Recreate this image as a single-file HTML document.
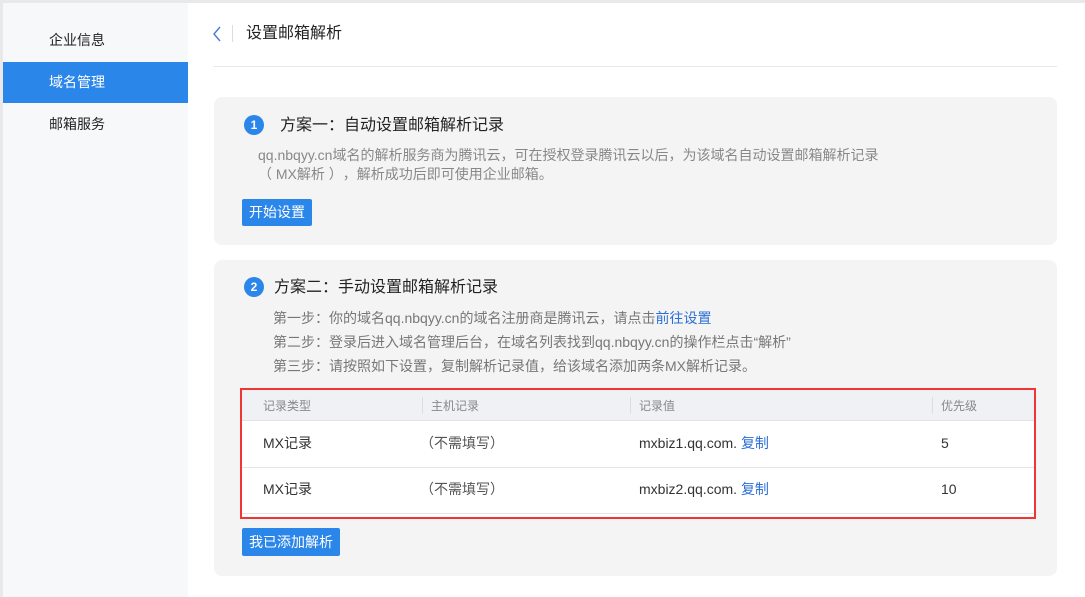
<!DOCTYPE html><html><head><meta charset="utf-8"><style>
*{margin:0;padding:0;box-sizing:border-box}
body{width:1085px;height:597px;background:#e9e9e9;font-family:"Liberation Sans","Noto Sans CJK SC",sans-serif;position:relative;overflow:hidden}
.a{position:absolute;line-height:21px;white-space:nowrap}
.side{left:3px;top:3px;width:185px;height:594px;background:#f7f8fa}
.main{left:188px;top:3px;width:897px;height:594px;background:#fff}
.nav{left:3px;width:185px;height:41px;line-height:41px;padding-left:46px;font-size:14px;color:#222}
.card{left:214px;width:843px;background:#f4f4f4;border-radius:8px}
.num{width:20px;height:20px;border-radius:50%;background:#2b86ea;color:#fff;font-size:12px;text-align:center;line-height:20px;font-weight:bold}
.h{font-size:16px;color:#222}
.btn{background:#2b86ea;color:#fff;font-size:14px;text-align:center;border-radius:2px}
.t{font-size:14px;color:#888}
.s{font-size:14px;color:#777}
.cell{font-size:14px;color:#333}
.hd{font-size:12px;color:#888}
.c{display:inline-block;width:1em;text-align:center}
.k{display:inline-block;width:1em;text-align:left}
</style></head><body>
<div class="a side"></div><div class="a main"></div>
<div class="a nav" style="top:20px">企业信息</div>
<div class="a nav" style="top:62px;background:#2b86ea;color:#fff">域名管理</div>
<div class="a nav" style="top:104px">邮箱服务</div>
<svg class="a" style="left:211px;top:25px" width="14" height="18"><path d="M9 2 L3 9 L9 16" stroke="#4a7bd0" stroke-width="1.4" fill="none"/></svg>
<div class="a" style="left:232px;top:25px;width:1px;height:17px;background:#ddd"></div>
<div class="a h" style="left:246px;top:23px">设置邮箱解析</div>
<div class="a" style="left:213px;top:66px;width:844px;height:1px;background:#e8e8e8"></div>

<div class="a card" style="top:97px;height:148px"></div>
<div class="a num" style="left:244px;top:115px">1</div>
<div class="a h" style="left:280px;top:115px">方案一<span class="c">：</span>自动设置邮箱解析记录</div>
<div class="a t" style="left:258px;top:145px">qq.nbqyy.cn域名的解析服务商为腾讯云<span class="k">，</span>可在授权登录腾讯云以后<span class="k">，</span>为该域名自动设置邮箱解析记录</div>
<div class="a t" style="left:258px;top:164px">（ MX解析 ）<span class="k">，</span>解析成功后即可使用企业邮箱。</div>
<div class="a btn" style="left:242px;top:199px;width:70px;height:27px;line-height:27px">开始设置</div>

<div class="a card" style="top:260px;height:316px"></div>
<div class="a num" style="left:244px;top:277px">2</div>
<div class="a h" style="left:274px;top:277px">方案二<span class="c">：</span>手动设置邮箱解析记录</div>
<div class="a s" style="left:273px;top:308px">第一步<span class="c">：</span>你的域名qq.nbqyy.cn的域名注册商是腾讯云<span class="k">，</span>请点击<span style="color:#2b6fd6">前往设置</span></div>
<div class="a s" style="left:273px;top:332px">第二步<span class="c">：</span>登录后进入域名管理后台<span class="k">，</span>在域名列表找到qq.nbqyy.cn的操作栏点击“解析”</div>
<div class="a s" style="left:273px;top:356px">第三步<span class="c">：</span>请按照如下设置<span class="k">，</span>复制解析记录值<span class="k">，</span>给该域名添加两条MX解析记录。</div>

<div class="a" style="left:240px;top:388px;width:796px;height:131px;border:2px solid #f03535;background:#fff"></div>
<div class="a" style="left:242px;top:390px;width:792px;height:31px;background:#f0f1f4;border-bottom:1px solid #e3e3e3"></div>
<div class="a" style="left:422px;top:397px;width:1px;height:17px;background:#ddd"></div>
<div class="a" style="left:630px;top:397px;width:1px;height:17px;background:#ddd"></div>
<div class="a" style="left:932px;top:397px;width:1px;height:17px;background:#ddd"></div>
<div class="a hd" style="left:263px;top:396px">记录类型</div>
<div class="a hd" style="left:431px;top:396px">主机记录</div>
<div class="a hd" style="left:639px;top:396px">记录值</div>
<div class="a hd" style="left:941px;top:396px">优先级</div>
<div class="a" style="left:242px;top:467px;width:792px;height:1px;background:#e5e5e5"></div>
<div class="a" style="left:242px;top:513px;width:792px;height:1px;background:#e5e5e5"></div>
<div class="a cell" style="left:263px;top:433px">MX记录</div>
<div class="a cell" style="left:420px;top:433px;color:#555">（不需填写）</div>
<div class="a cell" style="left:639px;top:433px">mxbiz1.qq.com. <span style="color:#2b6fd6">复制</span></div>
<div class="a cell" style="left:941px;top:433px">5</div>
<div class="a cell" style="left:263px;top:479px">MX记录</div>
<div class="a cell" style="left:420px;top:479px;color:#555">（不需填写）</div>
<div class="a cell" style="left:639px;top:479px">mxbiz2.qq.com. <span style="color:#2b6fd6">复制</span></div>
<div class="a cell" style="left:941px;top:479px">10</div>
<div class="a btn" style="left:242px;top:528px;width:98px;height:28px;line-height:28px">我已添加解析</div>
</body></html>
